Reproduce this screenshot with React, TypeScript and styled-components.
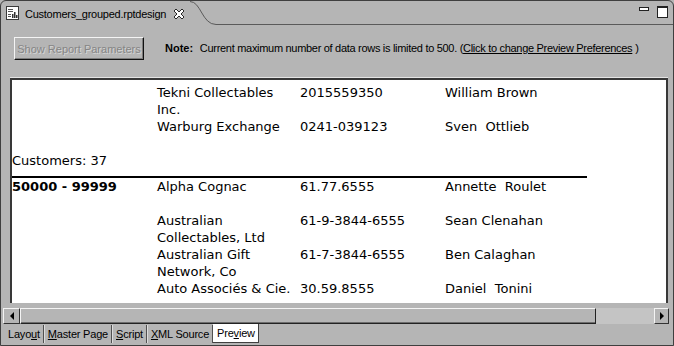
import styled, { createGlobalStyle } from "styled-components";

const GlobalStyle = createGlobalStyle`
  html, body {
    margin: 0;
    padding: 0;
    background: #b5b5b5;
    overflow: hidden;
  }
`;

const Window = styled.div`
  width: 674px;
  height: 346px;
  box-sizing: border-box;
  border: 1px solid #3f3f3f;
  border-radius: 6px 6px 0 0;
  background: #b5b5b5;
  display: flex;
  flex-direction: column;
  overflow: hidden;
  font-family: "Liberation Sans", Arial, sans-serif;
  font-size: 11px;
  color: #000;
`;

const TabStrip = styled.div`
  height: 24px;
  display: flex;
  flex-shrink: 0;
`;

const EditorTab = styled.div`
  width: 189px;
  box-sizing: border-box;
  display: flex;
  align-items: center;
  padding: 0 5px 0 5px;
  gap: 6px;
`;

const TabTitle = styled.span`
  letter-spacing: -0.25px;
  white-space: nowrap;
  margin-top: 1px;
`;

const CloseBox = styled.span`
  margin-left: auto;
  display: flex;
  margin-top: 2px;
`;

const Filler = styled.div`
  flex: 1;
  border-bottom: 1px solid #5a5a5a;
  display: flex;
  justify-content: flex-end;
  align-items: flex-start;
  gap: 8px;
  padding: 5px 5px 0 0;
`;

const MinButton = styled.div`
  width: 10px;
  height: 4px;
  box-sizing: border-box;
  border: 1px solid #222;
  background: #fff;
  margin-top: 1px;
`;

const MaxButton = styled.div`
  width: 11px;
  height: 12px;
  box-sizing: border-box;
  border: 1px solid #222;
  border-top-width: 2px;
  background: #fff;
`;

const Toolbar = styled.div`
  height: 52px;
  flex-shrink: 0;
  box-sizing: border-box;
  display: flex;
  align-items: flex-start;
  padding: 12px 0 0 13px;
  gap: 21px;
`;

const ParamButton = styled.button`
  width: 130px;
  height: 23px;
  box-sizing: border-box;
  padding: 0;
  background: #b5b5b5;
  border-top: 1px solid #f4f4f4;
  border-left: 1px solid #f4f4f4;
  border-right: 1px solid #111;
  border-bottom: 1px solid #111;
  box-shadow: inset -1px -1px 0 #7c7c7c;
  color: #858585;
  text-shadow: 1px 1px 0 #d6d6d6;
  font-family: inherit;
  font-size: 11px;
`;

const Note = styled.div`
  line-height: 23px;
  white-space: nowrap;
  letter-spacing: -0.3px;
`;

const NoteLabel = styled.b`
  margin-right: 4px;
  letter-spacing: 0;
`;

const Link = styled.span`
  text-decoration: underline;
  margin-right: 3px;
`;

const Frame = styled.div`
  margin: 1px 5px 0 9px;
  height: 225px;
  flex-shrink: 0;
  box-sizing: border-box;
  border: 2px solid #383838;
  border-bottom: none;
  box-shadow: 0 -1px 0 #e4e4e4;
  background: #fff;
  overflow: hidden;
  padding-top: 4px;
  font-family: "DejaVu Sans", Verdana, sans-serif;
  font-size: 13px;
  line-height: 17px;
`;

const Row = styled.div<{ $h: number }>`
  display: grid;
  grid-template-columns: 145px 143px 145px 142px;
  height: ${(p) => p.$h}px;
`;

const Cell = styled.div<{ $bold?: boolean }>`
  white-space: pre;
  font-weight: ${(p) => (p.$bold ? "bold" : "normal")};
`;

const Divider = styled.div`
  width: 576px;
  height: 2px;
  margin-left: -1px;
  background: #000;
`;

const HScroll = styled.div`
  margin: 5px 4px 0 2px;
  height: 16px;
  flex-shrink: 0;
  display: flex;
`;

const ArrowButton = styled.div<{ $w: number }>`
  width: ${(p) => p.$w}px;
  box-sizing: border-box;
  background: #b5b5b5;
  border-top: 1px solid #f4f4f4;
  border-left: 1px solid #f4f4f4;
  border-right: 1px solid #333;
  border-bottom: 1px solid #333;
  display: flex;
  align-items: center;
  justify-content: center;
`;

const Arrow = styled.span<{ $dir: "left" | "right" }>`
  width: 0;
  height: 0;
  border-top: 4px solid transparent;
  border-bottom: 4px solid transparent;
  ${(p) =>
    p.$dir === "left"
      ? "border-right: 4px solid #000;"
      : "border-left: 4px solid #000;"}
`;

const Thumb = styled.div`
  width: 576px;
  box-sizing: border-box;
  background: #b5b5b5;
  border-top: 1px solid #f4f4f4;
  border-left: 1px solid #f4f4f4;
  border-right: 1px solid #222;
  border-bottom: 1px solid #222;
  box-shadow: inset 0 -1px 0 #6c6c6c;
`;

const Track = styled.div`
  flex: 1;
  background: #c4c4c4;
`;

const PageTabs = styled.div`
  height: 21px;
  flex-shrink: 0;
  display: flex;
  align-items: flex-start;
  padding-left: 3px;
  letter-spacing: -0.2px;
`;

const PageTab = styled.div<{ $active?: boolean }>`
  height: 18px;
  line-height: 18px;
  padding: 0 3px 0 4px;
  white-space: nowrap;
  ${(p) =>
    p.$active
      ? `
    background: #fff;
    border-right: 1px solid #404040;
    border-bottom: 1px solid #404040;
    margin-top: 0;
  `
      : `
    margin-top: 1px;
    border-right: 1px solid #505050;
    box-shadow: 1px 0 0 #dcdcdc;
  `}
`;

const Key = styled.span`
  text-decoration: underline;
`;

function ReportIcon() {
  return (
    <svg width="13" height="14" viewBox="0 0 13 14">
      <rect x="0.5" y="0.5" width="12" height="13" fill="#fff" stroke="#3a3a3a" />
      <path d="M2 3.5h5M2 5.5h5M2 8.5h3M2 10.5h3" stroke="#555" />
      <rect x="6" y="8" width="1.5" height="4" fill="#333" />
      <rect x="8" y="6" width="1.5" height="6" fill="#333" />
      <rect x="10" y="9" width="1.5" height="3" fill="#333" />
    </svg>
  );
}

function CloseIcon() {
  return (
    <svg width="12" height="12" viewBox="0 0 12 12">
      <path
        d="M1 3L3 1L6 4L9 1L11 3L8 6L11 9L9 11L6 8L3 11L1 9L4 6Z"
        fill="#fff"
        stroke="#2a2a2a"
      />
    </svg>
  );
}

function TabCurve() {
  return (
    <svg width="26" height="24" viewBox="0 0 26 24" style={{ flexShrink: 0 }}>
      <path d="M0 0.5C11 0.5 12 23.5 26 23.5" fill="none" stroke="#5a5a5a" />
    </svg>
  );
}

const topRows = [
  ["", "Tekni Collectables\nInc.", "2015559350", "William Brown"],
  ["", "Warburg Exchange", "0241-039123", "Sven  Ottlieb"],
];

const groupRows = [
  ["50000 - 99999", "Alpha Cognac", "61.77.6555", "Annette  Roulet"],
  ["", "Australian\nCollectables, Ltd", "61-9-3844-6555", "Sean Clenahan"],
  ["", "Australian Gift\nNetwork, Co", "61-7-3844-6555", "Ben Calaghan"],
  ["", "Auto Associés & Cie.", "30.59.8555", "Daniel  Tonini"],
];

export default function App() {
  return (
    <>
      <GlobalStyle />
      <Window>
        <TabStrip>
          <EditorTab>
            <ReportIcon />
            <TabTitle>Customers_grouped.rptdesign</TabTitle>
            <CloseBox>
              <CloseIcon />
            </CloseBox>
          </EditorTab>
          <TabCurve />
          <Filler>
            <MinButton />
            <MaxButton />
          </Filler>
        </TabStrip>

        <Toolbar>
          <ParamButton disabled>Show Report Parameters</ParamButton>
          <Note>
            <NoteLabel>Note:</NoteLabel> Current maximum number of data rows is
            limited to 500. (<Link>Click to change Preview Preferences</Link>)
          </Note>
        </Toolbar>

        <Frame>
          {topRows.map((r, i) => (
            <Row key={i} $h={34}>
              {r.map((c, j) => (
                <Cell key={j}>{c}</Cell>
              ))}
            </Row>
          ))}
          <Row $h={24}>
            <Cell>Customers: 37</Cell>
          </Row>
          <Divider />
          {groupRows.map((r, i) => (
            <Row key={i} $h={34}>
              {r.map((c, j) => (
                <Cell key={j} $bold={j === 0}>
                  {c}
                </Cell>
              ))}
            </Row>
          ))}
        </Frame>

        <HScroll>
          <ArrowButton $w={17}>
            <Arrow $dir="left" />
          </ArrowButton>
          <Thumb />
          <Track />
          <ArrowButton $w={15}>
            <Arrow $dir="right" />
          </ArrowButton>
        </HScroll>

        <PageTabs>
          <PageTab>
            Layo<Key>u</Key>t
          </PageTab>
          <PageTab>
            <Key>M</Key>aster Page
          </PageTab>
          <PageTab>
            <Key>S</Key>cript
          </PageTab>
          <PageTab>
            <Key>X</Key>ML Source
          </PageTab>
          <PageTab $active>
            Pre<Key>v</Key>iew
          </PageTab>
        </PageTabs>
      </Window>
    </>
  );
}
